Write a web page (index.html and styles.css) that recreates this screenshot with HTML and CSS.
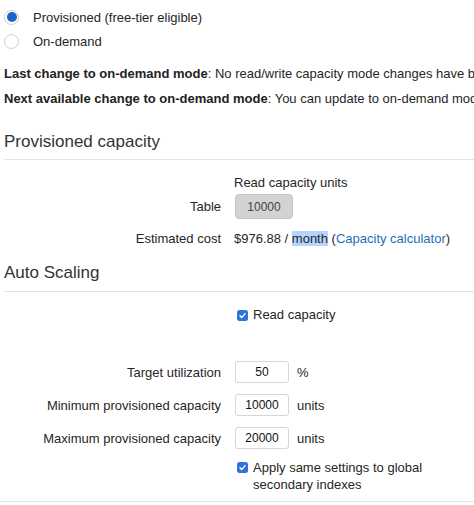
FILE: index.html
```html
<!DOCTYPE html>
<html lang="en">
<head>
  <meta charset="UTF-8">
  <title>Capacity settings</title>
  <link rel="stylesheet" href="styles.css">
</head>
<body>

<div class="radios">
  <label class="radio-row"><span class="radio checked"></span>Provisioned (free-tier eligible)</label>
  <label class="radio-row"><span class="radio"></span>On-demand</label>
</div>

<div class="info">
  <p><b>Last change to on-demand mode</b>: No read/write capacity mode changes have been made to this table.</p>
  <p><b>Next available change to on-demand mode</b>: You can update to on-demand mode at any time.</p>
</div>

<h3 class="section-title first">Provisioned capacity</h3>

<div class="form-grid cap">
  <span></span>
  <span class="col-head">Read capacity units</span>

  <span class="label">Table</span>
  <span><span class="field readonly">10000</span></span>

  <span class="label cost-row">Estimated cost</span>
  <span class="cost cost-row">$976.88 / <span class="hl">month</span> (<a href="#">Capacity calculator</a>)</span>
</div>

<h3 class="section-title">Auto Scaling</h3>

<div class="form-grid scaling">
  <span></span>
  <span class="check-row">
    <svg class="check" width="11" height="11" viewBox="0 0 11 11"><rect width="11" height="11" rx="2.5" fill="#2f74d8"/><path d="M3 5.8l1.7 1.8 3.4-4" fill="none" stroke="#fff" stroke-width="1.4" stroke-linecap="round" stroke-linejoin="round"/></svg>
    Read capacity
  </span>
</div>

<div class="form-grid fields">
  <span class="label">Target utilization</span>
  <span class="field-row"><span class="field">50</span>%</span>

  <span class="label">Minimum provisioned capacity</span>
  <span class="field-row"><span class="field">10000</span>units</span>

  <span class="label">Maximum provisioned capacity</span>
  <span class="field-row"><span class="field">20000</span>units</span>

  <span></span>
  <span class="check-row multi">
    <svg class="check" width="11" height="11" viewBox="0 0 11 11"><rect width="11" height="11" rx="2.5" fill="#2f74d8"/><path d="M3 5.8l1.7 1.8 3.4-4" fill="none" stroke="#fff" stroke-width="1.4" stroke-linecap="round" stroke-linejoin="round"/></svg>
    <span>Apply same settings to global<br>secondary indexes</span>
  </span>
</div>

</body>
</html>
```

FILE: styles.css
```css
body {
  margin: 0;
  font-family: "Liberation Sans", Arial, sans-serif;
  font-size: 13px;
  color: #262626;
  background: #fff;
  overflow: hidden;
  width: 474px;
}
.radios {
  padding-top: 5px;
}
.radio-row {
  display: flex;
  align-items: center;
  height: 24px;
  padding-left: 4px;
  white-space: nowrap;
}
.radio {
  box-sizing: border-box;
  width: 15px;
  height: 15px;
  border-radius: 50%;
  border: 1px solid #cfcfcf;
  background: #fff;
  margin-right: 14px;
  display: flex;
  align-items: center;
  justify-content: center;
}
.radio.checked::after {
  content: "";
  width: 10px;
  height: 10px;
  border-radius: 50%;
  background: #1c65c4;
}
.info {
  margin-top: 8px;
  padding-left: 4px;
  overflow: hidden;
}
.info p {
  margin: 0;
  line-height: 25px;
  white-space: nowrap;
}
.info b {
  color: #222;
}
.section-title {
  margin: 16px 0 0 4px;
  font-size: 17px;
  font-weight: normal;
  line-height: 20px;
  color: #333;
  padding-bottom: 8px;
  border-bottom: 1px solid #e3e3e3;
  width: 600px;
}
.section-title.first {
  margin-top: 21px;
  padding-bottom: 7px;
}
.form-grid {
  display: grid;
  grid-template-columns: 221px auto;
  column-gap: 13px;
  align-items: center;
}
.label {
  text-align: right;
  white-space: nowrap;
}
.cap {
  margin-top: 15px;
  row-gap: 3px;
}
.cap .col-head {
  line-height: 16px;
}
.cost-row {
  margin-top: 9px;
  line-height: 16px;
  white-space: nowrap;
}
.hl {
  background: #b5d5fd;
}
a {
  color: #1b6fb8;
  text-decoration: none;
}
.field {
  box-sizing: border-box;
  display: inline-flex;
  align-items: center;
  justify-content: center;
  width: 54px;
  height: 22px;
  border: 1px solid #d6d6d6;
  border-radius: 3px;
  font-size: 12px;
  color: #111;
  background: #fff;
  margin-left: 1px;
}
.field.readonly {
  width: 58px;
  height: 25px;
  background: #d3d3d3;
  border-color: #c4c4c4;
  border-radius: 4px;
  color: #444;
}
.field-row {
  display: flex;
  align-items: center;
  gap: 8px;
}
.scaling {
  margin-top: 15px;
}
.check-row {
  display: flex;
  align-items: center;
  line-height: 16px;
  padding-left: 3px;
  gap: 5px;
}
.check-row.multi {
  align-items: flex-start;
  line-height: 17px;
}
.check-row.multi .check {
  margin-top: 3px;
}
.fields {
  margin-top: 38px;
  row-gap: 11px;
  padding-bottom: 8px;
  border-bottom: 1px solid #e3e3e3;
  width: 600px;
}
.fields .check-row.multi {
  margin-top: -1px;
}
```
